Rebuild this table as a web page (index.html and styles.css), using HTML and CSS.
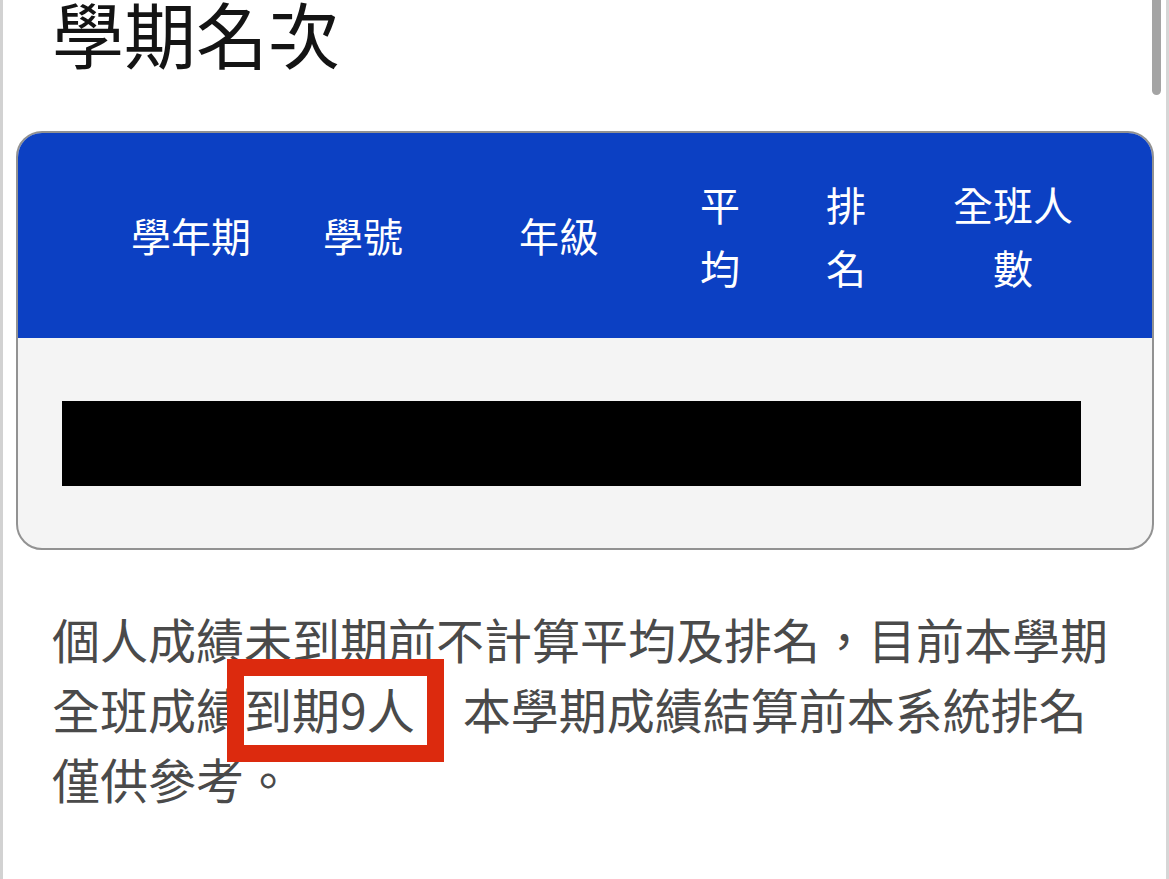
FILE: index.html
```html
<!DOCTYPE html>
<html lang="zh-Hant">
<head>
<meta charset="utf-8">
<title>學期名次</title>
<link rel="stylesheet" href="styles.css">
</head>
<body>
<div class="frame">
  <div class="scroll-thumb"></div>
  <main class="content">
    <h1 class="title">學期名次</h1>
    <section class="card">
      <div class="card-head">
        <div class="th c1">學年期</div>
        <div class="th c2">學號</div>
        <div class="th c3">年級</div>
        <div class="th c4">平均</div>
        <div class="th c5">排名</div>
        <div class="th c6">全班人數</div>
      </div>
      <div class="card-body">
        <div class="redacted"></div>
      </div>
    </section>
    <p class="note">個人成績未到期前不計算平均及排名，目前本學期全班成績<span class="hl">到期9人</span>，本學期成績結算前本系統排名僅供參考。</p>
  </main>
</div>
</body>
</html>
```

FILE: styles.css
```css
*, *::before, *::after { box-sizing: border-box; }

html, body {
  margin: 0;
  padding: 0;
  background: #ffffff;
}

body {
  font-family: "Noto Sans CJK TC", "Noto Sans", sans-serif;
}

.frame {
  position: relative;
  width: 1169px;
  height: 879px;
  overflow: hidden;
  border-left: 3px solid #d2d2d2;
  border-right: 3px solid #d6d6d6;
}

.scroll-thumb {
  position: absolute;
  top: 0;
  left: 1149px;
  width: 9px;
  height: 95px;
  background: #a4a4a4;
  border-radius: 0 0 5px 5px;
}

.content {
  padding: 0 12px 0 13px;
}

.title {
  margin: 0;
  padding-left: 36px;
  font-size: 72px;
  line-height: 64px;
  font-weight: 400;
  color: #141414;
}

.card {
  margin-top: 67px;
  border: 2px solid #929292;
  border-radius: 26px;
  overflow: hidden;
  background: #f4f4f4;
}

.card-head {
  height: 205px;
  background: #0c40c3;
  display: grid;
  grid-template-columns: 172px 172px 220px 102px 150px 184px;
  padding-left: 87px;
  align-items: center;
}

.th {
  color: #ffffff;
  font-size: 40px;
  line-height: 63px;
  text-align: center;
}

.c4 { padding: 0 21px; }
.c5 { padding: 0 45px; }
.c6 { padding: 0 17px; }

.card-body {
  height: 210px;
  padding-top: 63px;
}

.redacted {
  margin-left: 44px;
  width: 1019px;
  height: 85px;
  background: #000000;
}

.note {
  margin: 53px 0 0;
  padding-left: 36px;
  width: 1100px;
  font-size: 48px;
  line-height: 70px;
  color: #4a4a4a;
}

.hl {
  position: relative;
  z-index: 2;
}

.hl::before {
  content: "";
  position: absolute;
  z-index: -1;
  left: -17px;
  top: -14px;
  width: 217px;
  height: 103px;
  background: #ffffff;
  border: 17px solid #dc2a0e;
}
```
